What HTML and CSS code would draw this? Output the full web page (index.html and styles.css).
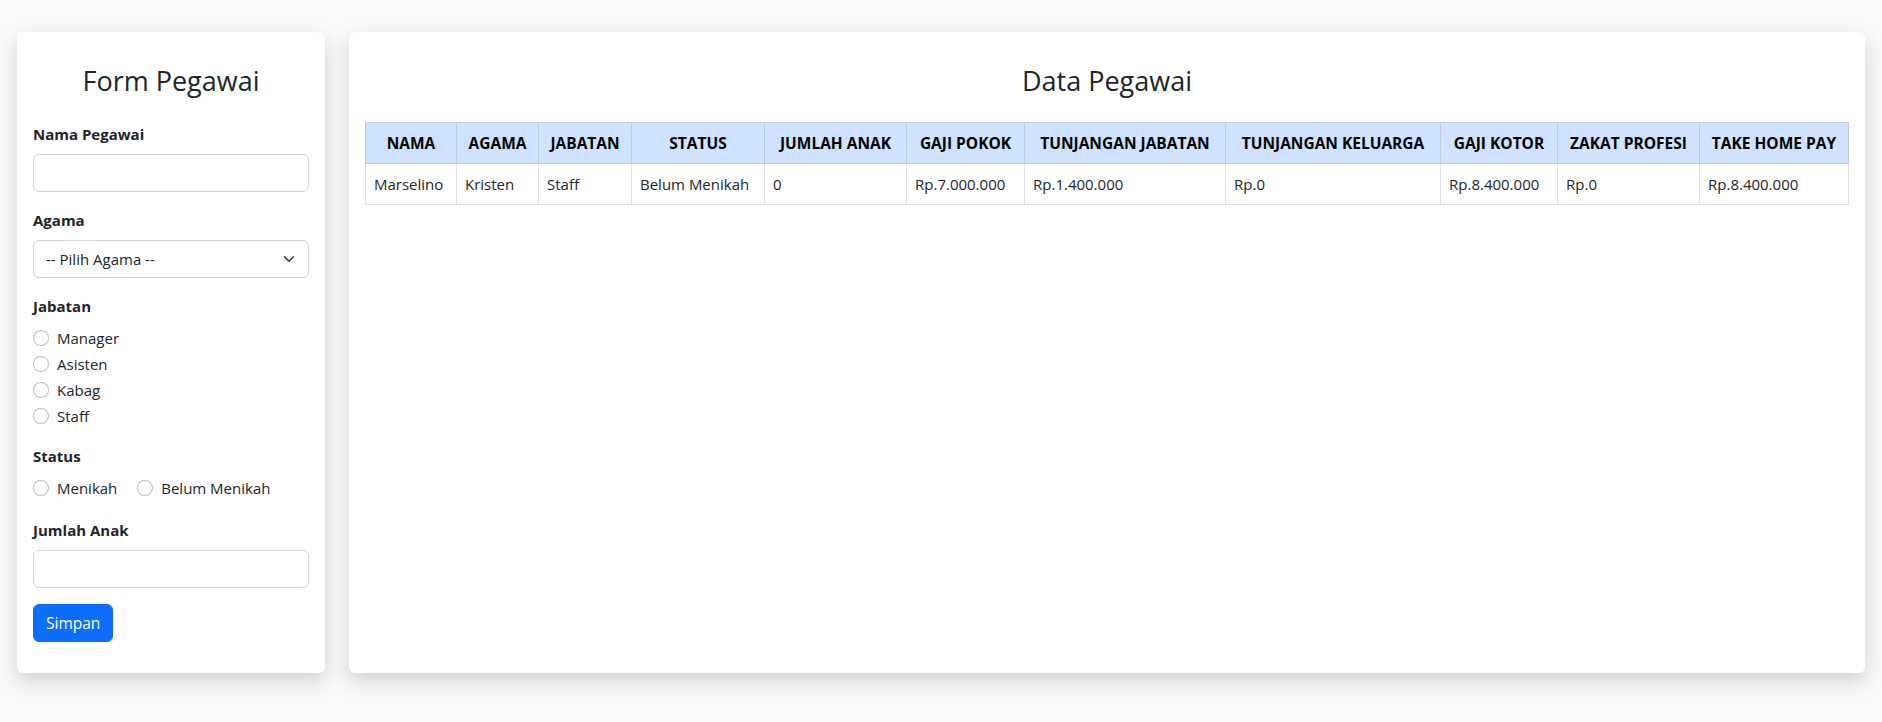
FILE: index.html
```html
<!DOCTYPE html>
<html lang="id">
<head>
<meta charset="utf-8">
<title>Data Pegawai</title>
<link rel="stylesheet" href="styles.css">
</head>
<body>
<div class="page">
  <aside class="card form-card">
    <h3 class="card-title">Form Pegawai</h3>
    <form class="form">
      <div class="group">
        <label class="label" for="nama">Nama Pegawai</label>
        <input class="control" id="nama" type="text">
      </div>
      <div class="group">
        <label class="label" for="agama">Agama</label>
        <div class="select-wrap">
          <select class="control select" id="agama">
            <option>-- Pilih Agama --</option>
            <option>Islam</option>
            <option>Kristen</option>
            <option>Katolik</option>
            <option>Hindu</option>
            <option>Buddha</option>
          </select>
          <svg class="chevron" viewBox="0 0 16 16" width="16" height="12" aria-hidden="true"><path fill="none" stroke="#343a40" stroke-linecap="round" stroke-linejoin="round" stroke-width="2" d="m2 5 6 6 6-6"/></svg>
        </div>
      </div>
      <div class="group">
        <div class="label">Jabatan</div>
        <label class="check"><input class="radio" type="radio" name="jabatan">Manager</label>
        <label class="check"><input class="radio" type="radio" name="jabatan">Asisten</label>
        <label class="check"><input class="radio" type="radio" name="jabatan">Kabag</label>
        <label class="check"><input class="radio" type="radio" name="jabatan">Staff</label>
      </div>
      <div class="group">
        <div class="label">Status</div>
        <label class="check inline"><input class="radio" type="radio" name="status">Menikah</label>
        <label class="check inline"><input class="radio" type="radio" name="status">Belum Menikah</label>
      </div>
      <div class="group">
        <label class="label" for="anak">Jumlah Anak</label>
        <input class="control" id="anak" type="number">
      </div>
      <button class="btn" type="button">Simpan</button>
    </form>
  </aside>
  <main class="card data-card">
    <h3 class="card-title">Data Pegawai</h3>
    <table class="table">
      <colgroup>
        <col class="c-nama"><col class="c-agama"><col class="c-jabatan"><col class="c-status"><col class="c-anak"><col class="c-pokok"><col class="c-tjab"><col class="c-tkel"><col class="c-kotor"><col class="c-zakat"><col class="c-thp">
      </colgroup>
      <thead>
        <tr>
          <th>NAMA</th><th>AGAMA</th><th>JABATAN</th><th>STATUS</th><th>JUMLAH ANAK</th><th>GAJI POKOK</th><th>TUNJANGAN JABATAN</th><th>TUNJANGAN KELUARGA</th><th>GAJI KOTOR</th><th>ZAKAT PROFESI</th><th>TAKE HOME PAY</th>
        </tr>
      </thead>
      <tbody>
        <tr>
          <td>Marselino</td><td>Kristen</td><td>Staff</td><td>Belum Menikah</td><td>0</td><td>Rp.7.000.000</td><td>Rp.1.400.000</td><td>Rp.0</td><td>Rp.8.400.000</td><td>Rp.0</td><td>Rp.8.400.000</td>
        </tr>
      </tbody>
    </table>
  </main>
</div>
</body>
</html>
```

FILE: styles.css
```css
* { box-sizing: border-box; }

html, body {
  margin: 0;
  background: #f8f9fa;
}

body {
  font-family: "Open Sans", "Noto Sans", "Liberation Sans", sans-serif;
  font-size: 15px;
  line-height: 24px;
  color: #212529;
}

.page {
  display: flex;
  align-items: stretch;
  gap: 24px;
  padding: 32px 18px 49px 17px;
}

.card {
  background: #fff;
  border-radius: 6px;
  box-shadow: 0 8px 20px rgba(0, 0, 0, 0.16);
}

.form-card {
  width: 308px;
  flex: 0 0 308px;
  padding: 32px 16px 31px;
}

.data-card {
  flex: 1 1 auto;
  padding: 32px 16px;
}

.card-title {
  margin: 0 0 24px;
  font-size: 27px;
  font-weight: 500;
  line-height: 33.6px;
  text-align: center;
  color: #212529;
}

.group {
  margin-bottom: 16px;
}

.label {
  display: block;
  margin-bottom: 8px;
  font-weight: 700;
  line-height: 24px;
}

.control {
  display: block;
  width: 100%;
  height: 38px;
  padding: 6px 12px;
  font: inherit;
  line-height: 24px;
  color: #212529;
  background: #fff;
  border: 1px solid #ced4da;
  border-radius: 6px;
  outline: none;
}

.select-wrap {
  position: relative;
}

.select {
  appearance: none;
  -webkit-appearance: none;
  padding-right: 36px;
}

.chevron {
  position: absolute;
  right: 12px;
  top: 13px;
  pointer-events: none;
}

.check {
  display: block;
  min-height: 24px;
  padding-left: 24px;
  margin-bottom: 2px;
  line-height: 24px;
}

.check.inline {
  display: inline-block;
  margin-right: 16px;
}

.radio {
  appearance: none;
  -webkit-appearance: none;
  float: left;
  width: 16px;
  height: 16px;
  margin: 4px 0 0 -24px;
  background: #fff;
  border: 1px solid rgba(0, 0, 0, 0.25);
  border-radius: 50%;
}

.btn {
  display: inline-block;
  padding: 6px 12px;
  font: inherit;
  font-size: 15.5px;
  line-height: 24px;
  color: #fff;
  background: #0d6efd;
  border: 1px solid #0d6efd;
  border-radius: 6px;
}

.table {
  width: 100%;
  table-layout: fixed;
  border-collapse: collapse;
}

.table th,
.table td {
  padding: 8px;
  line-height: 24px;
  white-space: nowrap;
  overflow: hidden;
}

.table th {
  background: #cfe2ff;
  color: #000;
  font-size: 15.5px;
  font-weight: 700;
  text-align: center;
  border: 1px solid #bacbe6;
}

.table td {
  border: 1px solid #dee2e6;
  text-align: left;
}

.c-nama { width: 91px; }
.c-agama { width: 82px; }
.c-jabatan { width: 93px; }
.c-status { width: 133px; }
.c-anak { width: 142px; }
.c-pokok { width: 118px; }
.c-tjab { width: 201px; }
.c-tkel { width: 215px; }
.c-kotor { width: 117px; }
.c-zakat { width: 142px; }
.c-thp { width: 149px; }
```
